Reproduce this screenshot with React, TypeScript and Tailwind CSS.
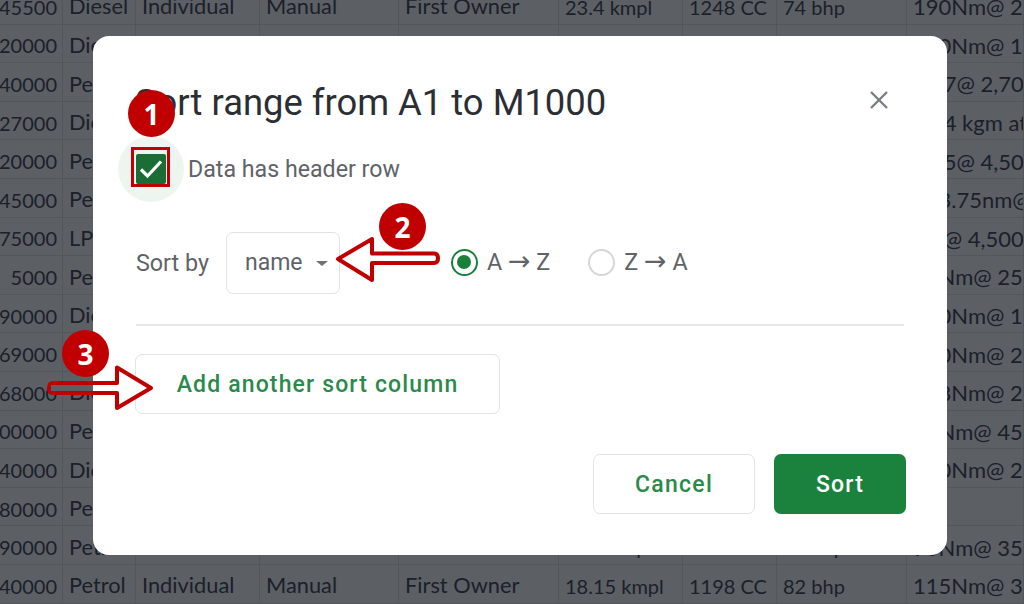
const rows = [
  ['45500', 'Diesel', 'Individual', 'Manual', 'First Owner', '23.4 kmpl', '1248 CC', '74 bhp', '190Nm@ 2000rpm'],
  ['120000', 'Diesel', 'Individual', 'Manual', 'Second Owner', '21.14 kmpl', '1498 CC', '103 bhp', '250Nm@ 1500rpm'],
  ['140000', 'Petrol', 'Individual', 'Manual', 'Third Owner', '17.7 kmpl', '1497 CC', '78 bhp', '12.7@ 2,700rpm'],
  ['127000', 'Diesel', 'Individual', 'Manual', 'First Owner', '23.0 kmpl', '1396 CC', '90 bhp', '22.4 kgm at 1750rpm'],
  ['120000', 'Petrol', 'Individual', 'Manual', 'First Owner', '16.1 kmpl', '1298 CC', '88 bhp', '11.5@ 4,500rpm'],
  ['45000', 'Petrol', 'Individual', 'Manual', 'First Owner', '20.14 kmpl', '1197 CC', '81 bhp', '113.75nm@ 4000rpm'],
  ['175000', 'LPG', 'Individual', 'Manual', 'First Owner', '17.3 kmpl', '1061 CC', '57 bhp', '7.8@ 4,500rpm'],
  ['5000', 'Petrol', 'Individual', 'Manual', 'Second Owner', '16.1 kmpl', '796 CC', '37 bhp', '59Nm@ 2500rpm'],
  ['90000', 'Diesel', 'Individual', 'Manual', 'First Owner', '23.59 kmpl', '1364 CC', '67 bhp', '170Nm@ 1800rpm'],
  ['169000', 'Diesel', 'Individual', 'Manual', 'First Owner', '20.0 kmpl', '1399 CC', '68 bhp', '160Nm@ 2000rpm'],
  ['68000', 'Diesel', 'Individual', 'Manual', 'Second Owner', '19.01 kmpl', '1461 CC', '108 bhp', '248Nm@ 2250rpm'],
  ['100000', 'Petrol', 'Individual', 'Manual', 'First Owner', '17.3 kmpl', '1248 CC', '74 bhp', '78Nm@ 4500rpm'],
  ['140000', 'Diesel', 'Individual', 'Manual', 'First Owner', '19.3 kmpl', '1248 CC', '73 bhp', '190Nm@ 2000rpm'],
  ['80000', 'Petrol', 'Individual', 'Manual', 'First Owner', '', '', '', ''],
  ['90000', 'Petrol', 'Individual', 'Manual', 'First Owner', '18.9 kmpl', '1197 CC', '82 bhp', '90Nm@ 3500rpm'],
  ['40000', 'Petrol', 'Individual', 'Manual', 'First Owner', '18.15 kmpl', '1198 CC', '82 bhp', '115Nm@ 3500rpm'],
];

function cellClass(j: number) {
  if (j === 0) return 'flex items-center justify-end overflow-hidden whitespace-nowrap border-r border-[#53565b] pr-[5px] pt-[4px]';
  if (j <= 4) return 'flex items-center overflow-hidden whitespace-nowrap border-r border-[#53565b] pl-[6px] pt-[4px] text-[21.8px]';
  if (j === 8) return 'flex items-center overflow-hidden whitespace-nowrap border-r border-[#53565b] pl-[6px] pt-[4px] text-[22px]';
  return 'flex items-center overflow-hidden whitespace-nowrap border-r border-[#53565b] pl-[6px] pt-[4px]';
}

function Sheet() {
  return (
    <div className="-mt-[14px] font-['Lato',sans-serif] text-[20px] text-[#1b202b]">
      {rows.map((row, i) => (
        <div key={i} className="grid h-[38.6px] grid-cols-[63px_73px_124px_139px_160px_124px_94px_130px_117px] border-b border-[#53565b]">
          {row.map((cell, j) => (
            <div key={j} className={cellClass(j)}>
              {cell}
            </div>
          ))}
        </div>
      ))}
    </div>
  );
}

function Radio({ on, from, to }: { on?: boolean; from: string; to: string }) {
  return (
    <div className="flex items-center gap-[9px]">
      <div className={on ? 'flex h-[27px] w-[27px] items-center justify-center rounded-full border-2 border-[#188038]' : 'h-[27px] w-[27px] rounded-full border-2 border-[#d5d6d8]'}>
        {on && <div className="h-[14px] w-[14px] rounded-full bg-[#188038]" />}
      </div>
      <span className="text-[23.3px] leading-[28px] text-[#5f6368]">
        {from} <span className="font-['DejaVu_Sans',sans-serif] text-[27px] leading-[20px]">→</span> {to}
      </span>
    </div>
  );
}

function Dialog() {
  return (
    <div className="absolute left-[93px] top-[36px] flex h-[519px] w-[854px] flex-col rounded-[16px] bg-white pl-[42px] pr-[41px] font-['Roboto',sans-serif]">
      <div className="mt-[43px] flex h-[48px] items-center justify-between">
        <h1 className="text-[36.4px] font-normal text-[#2b2e32]">Sort range from A1 to M1000</h1>
        <svg width="20" height="20" viewBox="0 0 20 20" className="mb-[6px] mr-[17px] text-[#7b7e82]">
          <path d="M2 2 L18 18 M18 2 L2 18" stroke="currentColor" strokeWidth="2.4" fill="none" />
        </svg>
      </div>
      <div className="mt-[18px] flex h-[48px] items-center">
        <div className="relative ml-[1px] flex h-[30px] w-[30px] items-center justify-center">
          <div className="absolute -inset-[18px] rounded-full bg-[#eef5f1]" />
          <div className="relative flex h-[30px] w-[30px] items-center justify-center rounded-[2px] bg-[#1a6e35]">
            <svg width="30" height="30" viewBox="0 0 30 30">
              <path d="M5 15.5 L11.5 22 L25 7.5" stroke="white" strokeWidth="3.2" fill="none" />
            </svg>
          </div>
        </div>
        <span className="ml-[22px] text-[23.2px] text-[#5f6368]">Data has header row</span>
      </div>
      <div className="mt-[39px] flex h-[62px] items-center">
        <span className="ml-[1px] text-[23.3px] text-[#5f6368]">Sort by</span>
        <div className="ml-[17px] flex h-[62px] w-[114px] items-center rounded-[7px] border border-[#e1e3e6] pl-[18px]">
          <span className="text-[23px] text-[#5f6368]">name</span>
          <div className="ml-[13px] h-0 w-0 border-x-[6px] border-t-[5px] border-x-transparent border-t-[#6f7276]" />
        </div>
        <div className="mb-[2px] ml-[111px] flex items-center gap-[38px]">
          <Radio on from="A" to="Z" />
          <Radio from="Z" to="A" />
        </div>
      </div>
      <div className="ml-[1px] mr-[2px] mt-[30px] h-[2px] bg-[#e6e7e9]" />
      <button className="mt-[28px] h-[60px] w-[365px] rounded-[7px] border border-[#e1e3e6] pt-[3px] text-[23px] font-medium tracking-[1.15px] text-[#2b8a4b]">
        Add another sort column
      </button>
      <div className="mt-[40px] flex justify-end gap-[19px]">
        <button className="h-[60px] w-[162px] rounded-[7px] border border-[#e1e3e6] pt-[3px] text-[23px] font-medium tracking-[1.3px] text-[#2b8a4b]">
          Cancel
        </button>
        <button className="h-[60px] w-[132px] rounded-[7px] bg-[#1a823d] pt-[3px] text-[23px] font-medium tracking-[1.2px] text-white">
          Sort
        </button>
      </div>
    </div>
  );
}

function Badge({ n, className }: { n: number; className: string }) {
  return (
    <div className={`absolute flex h-[47px] w-[47px] items-center justify-center rounded-full bg-[#c00000] font-['Open_Sans',sans-serif] text-[28px] font-bold text-white ${className}`}>
      {n}
    </div>
  );
}

function Annotations() {
  return (
    <>
      <svg width="1024" height="604" viewBox="0 0 1024 604" className="absolute left-0 top-0">
        <rect x="132.5" y="148.5" width="36" height="37" fill="none" stroke="#c00000" strokeWidth="3" />
        <path d="M338 259 L372 239 L372 253.5 L434 253.5 Q438 253.5 438 258.5 Q438 263 434 263 L372 263 L372 280 Z" fill="white" stroke="#c00000" strokeWidth="4" strokeLinejoin="round" />
        <path d="M151 388 L117 367.5 L117 383 L53 383 Q49 383 49 388.5 Q49 393 53 393 L117 393 L117 408 Z" fill="white" stroke="#c00000" strokeWidth="4" strokeLinejoin="round" />
        {/* tail of arrow 3 shows the dark sheet through it */}
        <rect x="51" y="385" width="42" height="6" fill="#5c5f64" />
      </svg>
      <Badge n={1} className="left-[128px] top-[90px]" />
      <Badge n={2} className="left-[379px] top-[203px]" />
      <Badge n={3} className="left-[62px] top-[330px]" />
    </>
  );
}

export default function App() {
  return (
    <div className="relative h-[604px] w-[1024px] overflow-hidden bg-[#5c5f64]">
      <Sheet />
      <Dialog />
      <Annotations />
    </div>
  );
}
